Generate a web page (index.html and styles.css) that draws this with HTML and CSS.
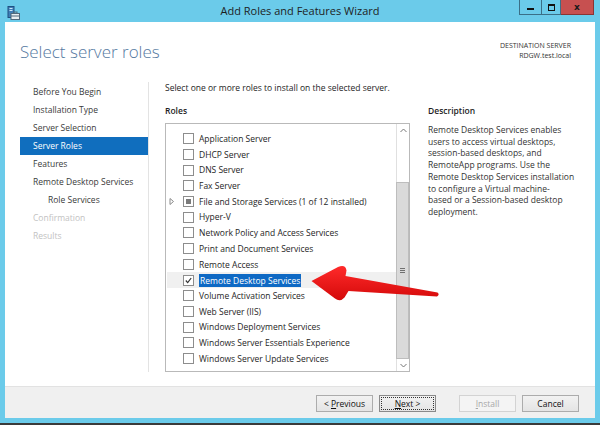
FILE: index.html
```html
<!DOCTYPE html>
<html lang="en">
<head>
    <meta charset="UTF-8">
    <title>Add Roles and Features Wizard</title>
    <link rel="stylesheet" href="styles.css">
</head>
<body>
    <div class="window">
        <!-- Title bar -->
        <div class="titlebar">
            <div class="tb-left">
                <svg class="app-icon" width="13" height="14" viewBox="0 0 13 14">
                    <rect x="1" y="0.5" width="6" height="11" fill="#3f7fb8" stroke="#1f4f80" stroke-width="1"/>
                    <rect x="2.5" y="2" width="3" height="1" fill="#cfe6f7"/>
                    <rect x="2.5" y="4" width="3" height="1" fill="#cfe6f7"/>
                    <rect x="4" y="7.5" width="8.5" height="6" fill="#e9eef2" stroke="#50697d" stroke-width="1"/>
                    <rect x="6.5" y="6" width="3.5" height="1.5" fill="none" stroke="#50697d" stroke-width="1"/>
                    <rect x="4" y="9.5" width="8.5" height="1" fill="#50697d"/>
                </svg>
            </div>
            <div class="title">Add Roles and Features Wizard</div>
            <div class="tb-right">
                <div class="cap-btn cap-min"><span></span></div>
                <div class="cap-btn cap-max"><span></span></div>
                <div class="cap-btn cap-close">x</div>
            </div>
        </div>

        <div class="client">
            <div class="header">
                <h1>Select server roles</h1>
                <div class="dest">
                    <div>DESTINATION SERVER</div>
                    <div>RDGW.test.local</div>
                </div>
            </div>

            <div class="body">
                <ul class="nav">
                    <li>Before You Begin</li>
                    <li>Installation Type</li>
                    <li>Server Selection</li>
                    <li class="active">Server Roles</li>
                    <li>Features</li>
                    <li>Remote Desktop Services</li>
                    <li class="sub">Role Services</li>
                    <li class="disabled">Confirmation</li>
                    <li class="disabled">Results</li>
                </ul>

                <div class="main">
                    <p class="intro">Select one or more roles to install on the selected server.</p>
                    <div class="columns">
                        <div class="roles-col">
                            <div class="label">Roles</div>
                            <div class="listbox">
                                <div class="rows">
                                    <div class="row"><span class="chk"></span>Application Server</div>
                                    <div class="row"><span class="chk"></span>DHCP Server</div>
                                    <div class="row"><span class="chk"></span>DNS Server</div>
                                    <div class="row"><span class="chk"></span>Fax Server</div>
                                    <div class="row">
                                        <svg class="expander" width="6" height="7" viewBox="0 0 6 7"><path d="M1 0.5 L4.5 3.5 L1 6.5 Z" fill="none" stroke="#8a8a8a" stroke-width="1"/></svg>
                                        <span class="chk partial"></span>File and Storage Services (1 of 12 installed)
                                    </div>
                                    <div class="row"><span class="chk"></span>Hyper-V</div>
                                    <div class="row"><span class="chk"></span>Network Policy and Access Services</div>
                                    <div class="row"><span class="chk"></span>Print and Document Services</div>
                                    <div class="row"><span class="chk"></span>Remote Access</div>
                                    <div class="row selected">
                                        <span class="chk checked">
                                            <svg width="7" height="7" viewBox="0 0 7 7"><path d="M0.8 3.5 L2.7 5.6 L6.2 1" fill="none" stroke="#333" stroke-width="1.2"/></svg>
                                        </span><span class="hl">Remote Desktop Services</span>
                                    </div>
                                    <div class="row"><span class="chk"></span>Volume Activation Services</div>
                                    <div class="row"><span class="chk"></span>Web Server (IIS)</div>
                                    <div class="row"><span class="chk"></span>Windows Deployment Services</div>
                                    <div class="row"><span class="chk"></span>Windows Server Essentials Experience</div>
                                    <div class="row"><span class="chk"></span>Windows Server Update Services</div>
                                </div>
                                <div class="scrollbar">
                                    <div class="sb-arrow">
                                        <svg width="7" height="5" viewBox="0 0 7 5"><path d="M0.5 4 L3.5 1 L6.5 4" fill="none" stroke="#777" stroke-width="1"/></svg>
                                    </div>
                                    <div class="sb-track"></div>
                                    <div class="sb-thumb"><span class="grip"></span></div>
                                    <div class="sb-arrow">
                                        <svg width="7" height="5" viewBox="0 0 7 5"><path d="M0.5 1 L3.5 4 L6.5 1" fill="none" stroke="#777" stroke-width="1"/></svg>
                                    </div>
                                </div>
                            </div>
                        </div>
                        <div class="desc-col">
                            <div class="label">Description</div>
                            <p class="desc">Remote Desktop Services enables users to access virtual desktops, session-based desktops, and RemoteApp programs. Use the Remote Desktop Services installation to configure a Virtual machine-<br>based or a Session-based desktop deployment.</p>
                        </div>
                    </div>
                </div>
            </div>

            <div class="footer">
                <button class="btn"><span>&lt; <u>P</u>revious</span></button>
                <button class="btn btn-default"><span class="focus"><span><u>N</u>ext &gt;</span></span></button>
                <button class="btn btn-install" disabled><span><u>I</u>nstall</span></button>
                <button class="btn"><span>Cancel</span></button>
            </div>
        </div>

        <!-- red call-out arrow -->
        <svg class="arrow" width="150" height="50" viewBox="300 255 150 50">
            <defs>
                <linearGradient id="red" x1="0" y1="0" x2="0" y2="1">
                    <stop offset="0" stop-color="#ff2a2a"/>
                    <stop offset="1" stop-color="#d40a0a"/>
                </linearGradient>
            </defs>
            <path d="M311.5 281 L338 267 Q345.5 264 346.5 270.5 L345.5 276 L437.5 292.5 Q440 294.5 437 296.5 L348.5 291 L344.5 297.5 Q340 302.5 335 298.5 Z" fill="url(#red)"/>
        </svg>
    </div>
</body>
</html>
```

FILE: styles.css
```css
body {
    margin: 0;
    font-family: 'Open Sans', 'Noto Sans', sans-serif;
    color: #1e1e1e;
}
.window {
    position: relative;
    width: 600px;
    height: 425px;
    box-sizing: border-box;
    background: #6bcbea;
    border-bottom: 2px solid #3a3a3a;
    padding: 0 5px 5px 5px;
    display: flex;
    flex-direction: column;
    overflow: hidden;
}

/* title bar */
.titlebar {
    height: 22px;
    flex: none;
    display: grid;
    grid-template-columns: 1fr auto 1fr;
    align-items: start;
    margin: 0 -5px;
}
.tb-left {
    padding: 3px 0 0 7px;
}
.title {
    font-size: 11px;
    line-height: 22px;
    color: #1e1e1e;
}
.tb-right {
    display: flex;
    justify-content: flex-end;
    padding-right: 6px;
}
.cap-btn {
    height: 14px;
    border: 1px solid #3b6f87;
    border-top: none;
    display: flex;
    align-items: center;
    justify-content: center;
}
.cap-min {
    width: 21px;
}
.cap-min span {
    width: 7px;
    height: 2px;
    background: #111;
    margin-top: 4px;
}
.cap-max {
    width: 18px;
    border-left: none;
}
.cap-max span {
    width: 5px;
    height: 4px;
    border: 1px solid #111;
    border-top-width: 2px;
}
.cap-close {
    width: 32px;
    border-left: none;
    background: #c75050;
    border-color: #8a3434;
    font-family: 'DejaVu Sans', sans-serif;
    font-weight: bold;
    font-size: 9px;
    color: #1a1a1a;
}

/* client area */
.client {
    flex: 1;
    background: #fff;
    display: flex;
    flex-direction: column;
}
.header {
    height: 60px;
    flex: none;
    display: flex;
    justify-content: space-between;
    align-items: flex-start;
    padding: 0 24px 0 15px;
}
h1 {
    margin: 18px 0 0 0;
    font-weight: 300;
    font-size: 17px;
    color: #55799f;
}
.dest {
    margin-top: 19px;
    text-align: right;
    font-size: 7px;
    line-height: 10px;
    color: #333;
}

.body {
    flex: 1;
    display: flex;
}
.nav {
    list-style: none;
    margin: 0 0 14px 15px;
    padding: 1px 0 0 0;
    width: 128px;
    border-right: 1px solid #e3e3e3;
    font-size: 8.5px;
}
.nav li {
    height: 18px;
    line-height: 18px;
    padding-left: 13px;
    color: #3a3a3a;
}
.nav li.sub {
    padding-left: 28px;
}
.nav li.active {
    background: #106ebe;
    color: #fff;
}
.nav li.disabled {
    color: #c2c2c2;
}

.main {
    flex: 1;
    padding-left: 16px;
    font-size: 8.5px;
}
.intro {
    margin: 0;
    line-height: 12px;
}
.columns {
    display: flex;
    margin-top: 11px;
}
.label {
    font-weight: 600;
    line-height: 12px;
}
.roles-col {
    width: 245px;
}
.listbox {
    margin-top: 6px;
    height: 249px;
    box-sizing: border-box;
    border: 1px solid #b9b9b9;
    display: flex;
}
.rows {
    flex: 1;
    padding-top: 7px;
}
.row {
    position: relative;
    height: 15.7px;
    line-height: 15.7px;
    display: flex;
    align-items: center;
    padding-left: 17px;
    white-space: nowrap;
}
.row.selected {
    background: #f0f0f0;
    margin-left: 1px;
    padding-left: 16px;
}
.expander {
    position: absolute;
    left: 3px;
    top: 4px;
}
.chk {
    width: 9px;
    height: 9px;
    border: 1px solid #8d8d8d;
    background: #fff;
    margin-right: 5px;
    display: flex;
    align-items: center;
    justify-content: center;
    flex: none;
}
.chk.partial::after {
    content: '';
    width: 5px;
    height: 5px;
    background: #7a7a7a;
}
.hl {
    background: #0e69c4;
    color: #fff;
    padding: 0 1px;
    line-height: 13px;
}

.scrollbar {
    width: 12px;
    border-left: 1px solid #e0e0e0;
    display: flex;
    flex-direction: column;
}
.sb-arrow {
    height: 12px;
    display: flex;
    align-items: center;
    justify-content: center;
    flex: none;
}
.sb-track {
    height: 46px;
}
.sb-thumb {
    flex: 1;
    background: #dadada;
    border: 1px solid #bdbdbd;
    margin: 0 0 0 -1px;
    display: flex;
    align-items: center;
    justify-content: center;
}
.grip {
    width: 5px;
    height: 5px;
    background: repeating-linear-gradient(#707070 0 1px, transparent 1px 2px);
}

.desc-col {
    margin-left: 18px;
    width: 150px;
}
.desc {
    margin: 7px 0 0 0;
    line-height: 11.7px;
    color: #333;
}

/* footer */
.footer {
    height: 32px;
    flex: none;
    box-sizing: border-box;
    background: #f0f0f0;
    border-top: 1px solid #e2e2e2;
    display: flex;
    justify-content: flex-end;
    align-items: flex-start;
    padding: 8px 16px 0 0;
    gap: 6px;
}
.btn {
    width: 57px;
    height: 17px;
    padding: 0;
    border: 1px solid #acacac;
    background: linear-gradient(#f2f2f2, #e4e4e4);
    font-family: 'Open Sans', 'Noto Sans', sans-serif;
    font-size: 8.5px;
    color: #111;
    display: flex;
    align-items: center;
    justify-content: center;
}
.btn-default {
    border-color: #8a8a8a;
    padding: 1px;
}
.btn-default .focus {
    flex: 1;
    align-self: stretch;
    border: 1px dotted #333;
    display: flex;
    align-items: center;
    justify-content: center;
}
.btn-install {
    margin-left: 17px;
    background: #f4f4f4;
    border-color: #d3d3d3;
    color: #a8a8a8;
}

.arrow {
    position: absolute;
    left: 300px;
    top: 255px;
}
```
